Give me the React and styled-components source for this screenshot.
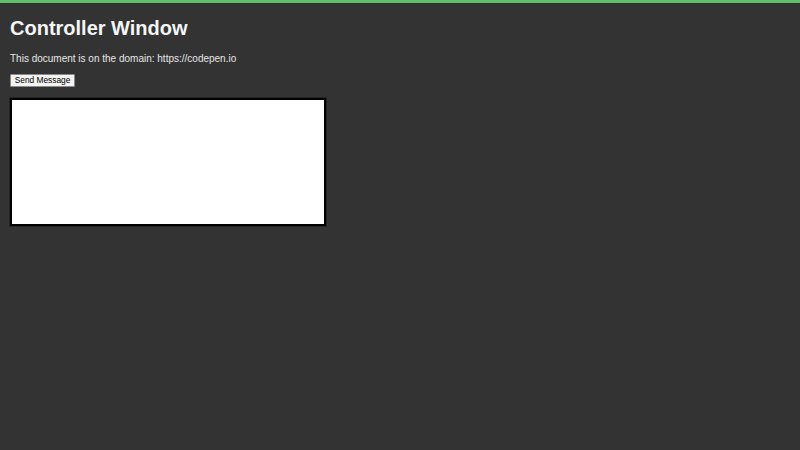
import React from "react";
import styled, { createGlobalStyle } from "styled-components";

const Global = createGlobalStyle`
  html, body { margin: 0; padding: 0; background: #333333; }
  body { border-top: 3px solid #5fbf6a; min-height: 447px; font-family: "Liberation Sans", Arial, sans-serif; color: #ffffff; }
`;

const Page = styled.main`
  display: flex;
  flex-direction: column;
  align-items: flex-start;
  padding: 13px 10px;
`;

const Title = styled.h1`
  margin: 0 0 13px;
  font-size: 20px;
  font-weight: bold;
  line-height: 24px;
  color: #f5f5f5;
`;

const Text = styled.p`
  margin: 0 0 9px;
  font-size: 10px;
  line-height: 12px;
  color: #e6e6e6;
`;

const Button = styled.button`
  font-family: "Liberation Sans", Arial, sans-serif;
  font-size: 8.33px;
  line-height: 9px;
  padding: 1px 3.75px;
  height: 13px;
  background: #f3f3f3;
  color: #000;
  border: 1px solid #8a8a8a;
  border-radius: 1px;
  margin-bottom: 11px;
`;

const Frame = styled.div`
  width: 312px;
  height: 124px;
  background: #ffffff;
  border: 2px solid #000000;
  box-shadow: 0 0 0 0.5px #1a1a1a;
  box-sizing: content-box;
`;

export default function App() {
  return (
    <>
      <Global />
      <Page>
        <Title>Controller Window</Title>
        <Text>This document is on the domain: https://codepen.io</Text>
        <Button>Send Message</Button>
        <Frame />
      </Page>
    </>
  );
}
